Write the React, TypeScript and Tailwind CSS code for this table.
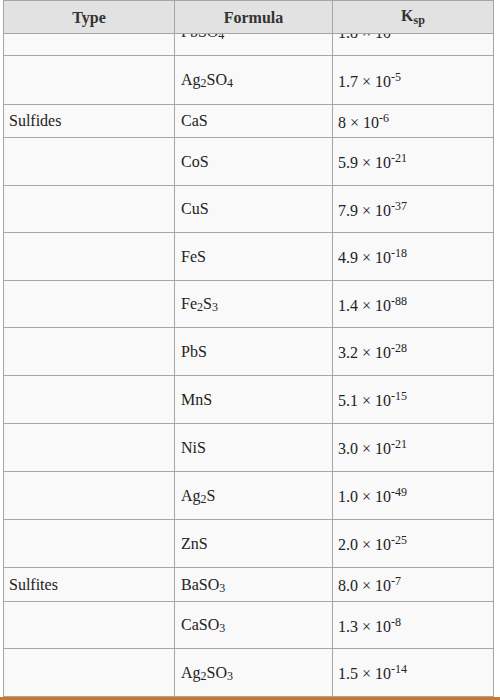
import React from 'react';

type Row = {
    type?: string;
    formula: React.ReactNode;
    ksp: [string, string];
    h: string;
};

const Sub = ({ children }: { children: React.ReactNode }) => <sub className="text-[12px]">{children}</sub>;

const rows: Row[] = [
    { formula: <>PbSO<Sub>4</Sub></>, ksp: ['1.8', '-8'], h: 'h-[48px]' },
    { formula: <>Ag<Sub>2</Sub>SO<Sub>4</Sub></>, ksp: ['1.7', '-5'], h: 'h-[49px]' },
    { type: 'Sulfides', formula: 'CaS', ksp: ['8', '-6'], h: 'h-[33px]' },
    { formula: 'CoS', ksp: ['5.9', '-21'], h: 'h-[48px]' },
    { formula: 'CuS', ksp: ['7.9', '-37'], h: 'h-[47px]' },
    { formula: 'FeS', ksp: ['4.9', '-18'], h: 'h-[48px]' },
    { formula: <>Fe<Sub>2</Sub>S<Sub>3</Sub></>, ksp: ['1.4', '-88'], h: 'h-[47px]' },
    { formula: 'PbS', ksp: ['3.2', '-28'], h: 'h-[48px]' },
    { formula: 'MnS', ksp: ['5.1', '-15'], h: 'h-[48px]' },
    { formula: 'NiS', ksp: ['3.0', '-21'], h: 'h-[48px]' },
    { formula: <>Ag<Sub>2</Sub>S</>, ksp: ['1.0', '-49'], h: 'h-[48px]' },
    { formula: 'ZnS', ksp: ['2.0', '-25'], h: 'h-[48px]' },
    { type: 'Sulfites', formula: <>BaSO<Sub>3</Sub></>, ksp: ['8.0', '-7'], h: 'h-[34px]' },
    { formula: <>CaSO<Sub>3</Sub></>, ksp: ['1.3', '-8'], h: 'h-[47px]' },
    { formula: <>Ag<Sub>2</Sub>SO<Sub>3</Sub></>, ksp: ['1.5', '-14'], h: 'h-[48px]' },
];

const cols = 'grid grid-cols-[171px_158px_160px]';

export default function App() {
    return (
        <div className="w-[500px] h-[700px] bg-white overflow-hidden flex flex-col font-['Liberation_Serif',serif] text-[16px] text-[#222]">
            <div className="ml-[3px] w-[491px] flex-1 flex flex-col border-x border-[#a6a6a6] overflow-hidden">
                {/* header */}
                <div className={`${cols} h-[34px] shrink-0 bg-[#e2e2e2] border-y border-[#a6a6a6] font-bold text-[#333] relative z-10`}>
                    <div className="flex items-center justify-center border-r border-[#a6a6a6] pt-[1px]">Type</div>
                    <div className="flex items-center justify-center border-r border-[#a6a6a6] pt-[1px]">Formula</div>
                    <div className="flex items-center justify-center pb-[2px]">
                        <span>K<sub className="text-[12px]">sp</sub></span>
                    </div>
                </div>

                {/* body, scrolled under the header */}
                <div className="flex-1 overflow-hidden bg-[#f9f9f9]">
                    <div className="-mt-[26px]">
                        {rows.map((r, i) => (
                            <div key={i} className={`${cols} ${r.h} border-b border-[#a6a6a6]`}>
                                <div className="flex items-center pl-[5px] border-r border-[#a6a6a6]">{r.type ?? ''}</div>
                                <div className="flex items-center pl-[6px] border-r border-[#a6a6a6]">{r.formula}</div>
                                <div className="flex items-center pl-[5px] pt-[3px]">
                                    <span>
                                        {r.ksp[0]} × 10<sup className="text-[12px]">{r.ksp[1]}</sup>
                                    </span>
                                </div>
                            </div>
                        ))}
                    </div>
                </div>
            </div>
            <div className="h-[3px] shrink-0 bg-[#c9762f]" />
        </div>
    );
}
